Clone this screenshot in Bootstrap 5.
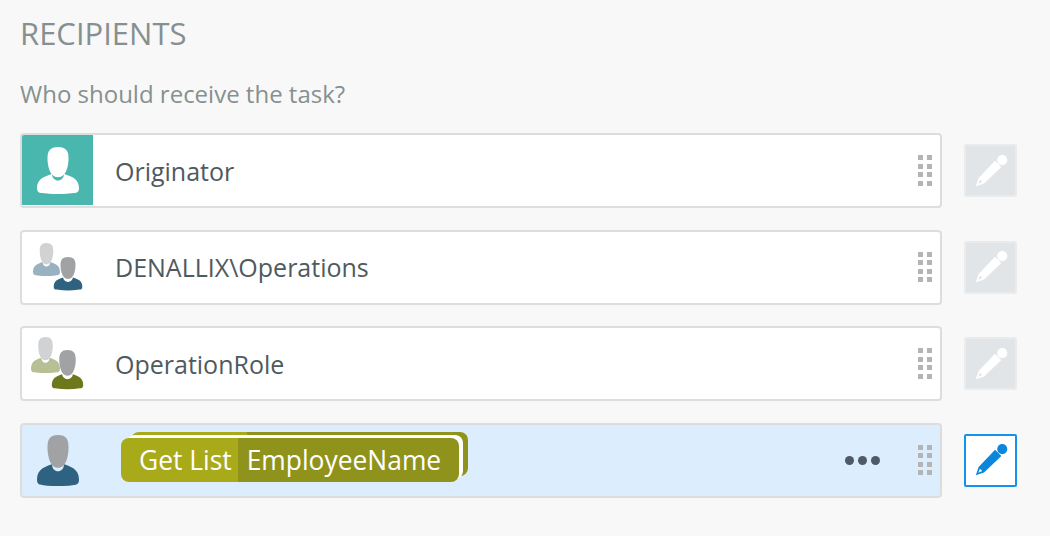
<!DOCTYPE html>
<html lang="en">
<head>
  <meta charset="UTF-8">
  <title>Recipients</title>
  <link href="https://cdn.jsdelivr.net/npm/bootstrap@5.3.0/dist/css/bootstrap.min.css" rel="stylesheet">
  <style>
    body { background: #f8f8f8; font-family: "Open Sans", sans-serif; overflow: hidden; }
    .page-wrap { padding: 14px 33px 0 20px; }
    .page-title { font-size: 31px; line-height: 38px; color: #879090; font-weight: 400; margin: 0 0 25px; }
    .page-hint { font-size: 24px; line-height: 34px; color: #879090; margin: 0 0 22px; }
    .rec-row { height: 75px; margin-bottom: 21.5px; }
    .rec-box { width: 922px; height: 100%; background: #fff; border: 2px solid #ddd; border-radius: 4px; overflow: hidden; }
    .rec-box.active-row { background: #dcedfe; }
    .rec-icon { width: 71px; flex: none; }
    .rec-icon.teal { background: #49b7ad; margin-bottom: 1px; }
    .rec-label { font-size: 25px; color: #4f5a5e; margin-left: 22px; padding-top: 2px; }
    .grip { width: 14px; display: grid; grid-template-columns: 5px 5px; column-gap: 4px; row-gap: 3.67px; margin-right: 8px; }
    .grip i { width: 5px; height: 5px; background: #b4b4b4; }
    .edit-btn { width: 53px; height: 53px; flex: none; margin-left: 22px; background: #e2e5e8; border: 2px solid #e9ebed; border-radius: 2px; padding: 0; }
    .edit-btn.on { background: #fff; border-color: #1394ec; }
    .edit-btn svg { display: block; margin: auto; }
    .more-dots { gap: 4px; margin-right: 38px; }
    .more-dots i { width: 9px; height: 9px; border-radius: 50%; background: #4f5a66; }
    .stack { position: relative; margin-left: 28px; font-size: 26.4px; line-height: 44px; color: #fff; }
    .stack-back { position: absolute; left: 10px; right: -9px; top: -6px; height: 44px; border-radius: 8px; background: linear-gradient(90deg, #a8aa1a 34.4%, #8f931c 34.4%); }
    .stack-mid { position: absolute; left: 6px; right: -4px; top: -3px; height: 44px; border-radius: 8px; background: #fff; }
    .stack-front { position: relative; border-radius: 8px; display: flex; overflow: hidden; }
    .part-a { background: #a8aa1a; padding: 0 6px 0 18px; }
    .part-b { background: #8f931c; padding: 0 18px 0 9px; }
  </style>
</head>
<body>
  <svg width="0" height="0" class="d-block position-absolute">
    <defs>
      <symbol id="pen" viewBox="0 0 32 32">
        <path fill-rule="evenodd" d="M19.600 6.800l5.600 5.600L9.800 27 2.500 29.500 5 22.200zM6.200 23.800l-1.500 3.500 3.500-1.500z"/>
        <circle cx="26" cy="6.300" r="4.500"/>
      </symbol>
      <symbol id="p-head" viewBox="0 0 42 47" preserveAspectRatio="none">
        <path d="M21 0C29 0 31.500 4 31.500 11 31.500 19 29.500 25 26.500 28 23.500 31 18.500 31 15.500 28 12.500 25 10.500 19 10.500 11 10.500 4 13 0 21 0z"/>
      </symbol>
      <symbol id="p-body" viewBox="0 0 42 47" preserveAspectRatio="none">
        <path d="M15 27C15 31 18 33.500 21 33.500 24 33.500 27 31 27 27 33 29 42 31 42 41 42 45 40 46 37 46 27 47.500 15 47.500 5 46 2 46 0 45 0 41 0 31 9 29 15 27z"/>
      </symbol>
    </defs>
  </svg>

  <div class="page-wrap">
    <h1 class="page-title">RECIPIENTS</h1>
    <p class="page-hint">Who should receive the task?</p>

    <div class="rec-row d-flex align-items-center">
      <div class="rec-box d-flex align-items-stretch">
        <div class="rec-icon teal d-flex align-items-center justify-content-center">
          <svg width="42" height="47" fill="#fff"><use href="#p-head" width="42" height="47"/><use href="#p-body" width="42" height="47"/></svg>
        </div>
        <div class="rec-label flex-grow-1 d-flex align-items-center">Originator</div>
        <div class="grip align-self-center"><i></i><i></i><i></i><i></i><i></i><i></i><i></i><i></i></div>
      </div>
      <button class="edit-btn" type="button"><svg width="36" height="36" fill="#fff"><use href="#pen"/></svg></button>
    </div>

    <div class="rec-row d-flex align-items-center">
      <div class="rec-box d-flex align-items-stretch">
        <div class="rec-icon d-flex align-items-center justify-content-center">
          <svg width="50" height="48">
            <use href="#p-body" fill="#99b2c1" x="0" y="0" width="27" height="33"/>
            <use href="#p-head" fill="#d0d2d3" x="0" y="0" width="27" height="33"/>
            <use href="#p-body" fill="#2e6280" stroke="#fff" stroke-width="2" x="20" y="14" width="30" height="34"/>
            <use href="#p-head" fill="#a0a2a3" x="20" y="14" width="30" height="34"/>
          </svg>
        </div>
        <div class="rec-label flex-grow-1 d-flex align-items-center">DENALLIX\Operations</div>
        <div class="grip align-self-center"><i></i><i></i><i></i><i></i><i></i><i></i><i></i><i></i></div>
      </div>
      <button class="edit-btn" type="button"><svg width="36" height="36" fill="#fff"><use href="#pen"/></svg></button>
    </div>

    <div class="rec-row d-flex align-items-center">
      <div class="rec-box d-flex align-items-stretch">
        <div class="rec-icon d-flex align-items-center justify-content-center">
          <svg width="53" height="53">
            <use href="#p-body" fill="#b7bf94" x="0" y="0" width="29" height="36"/>
            <use href="#p-head" fill="#d0d2d3" x="0" y="0" width="29" height="36"/>
            <use href="#p-body" fill="#6d771b" stroke="#fff" stroke-width="2" x="20" y="13" width="33" height="40"/>
            <use href="#p-head" fill="#a0a2a3" x="20" y="13" width="33" height="40"/>
          </svg>
        </div>
        <div class="rec-label flex-grow-1 d-flex align-items-center">OperationRole</div>
        <div class="grip align-self-center"><i></i><i></i><i></i><i></i><i></i><i></i><i></i><i></i></div>
      </div>
      <button class="edit-btn" type="button"><svg width="36" height="36" fill="#fff"><use href="#pen"/></svg></button>
    </div>

    <div class="rec-row d-flex align-items-center">
      <div class="rec-box active-row d-flex align-items-center">
        <div class="rec-icon align-self-stretch d-flex align-items-center justify-content-center">
          <svg width="42" height="51"><use href="#p-body" fill="#2e6280" width="42" height="51"/><use href="#p-head" fill="#a0a2a3" width="42" height="51"/></svg>
        </div>
        <div class="stack">
          <div class="stack-back"></div>
          <div class="stack-mid"></div>
          <div class="stack-front"><span class="part-a">Get List</span><span class="part-b">EmployeeName</span></div>
        </div>
        <div class="more-dots d-flex ms-auto"><i></i><i></i><i></i></div>
        <div class="grip"><i></i><i></i><i></i><i></i><i></i><i></i><i></i><i></i></div>
      </div>
      <button class="edit-btn on" type="button"><svg width="36" height="36" fill="#0a86dc"><use href="#pen"/></svg></button>
    </div>
  </div>
</body>
</html>
